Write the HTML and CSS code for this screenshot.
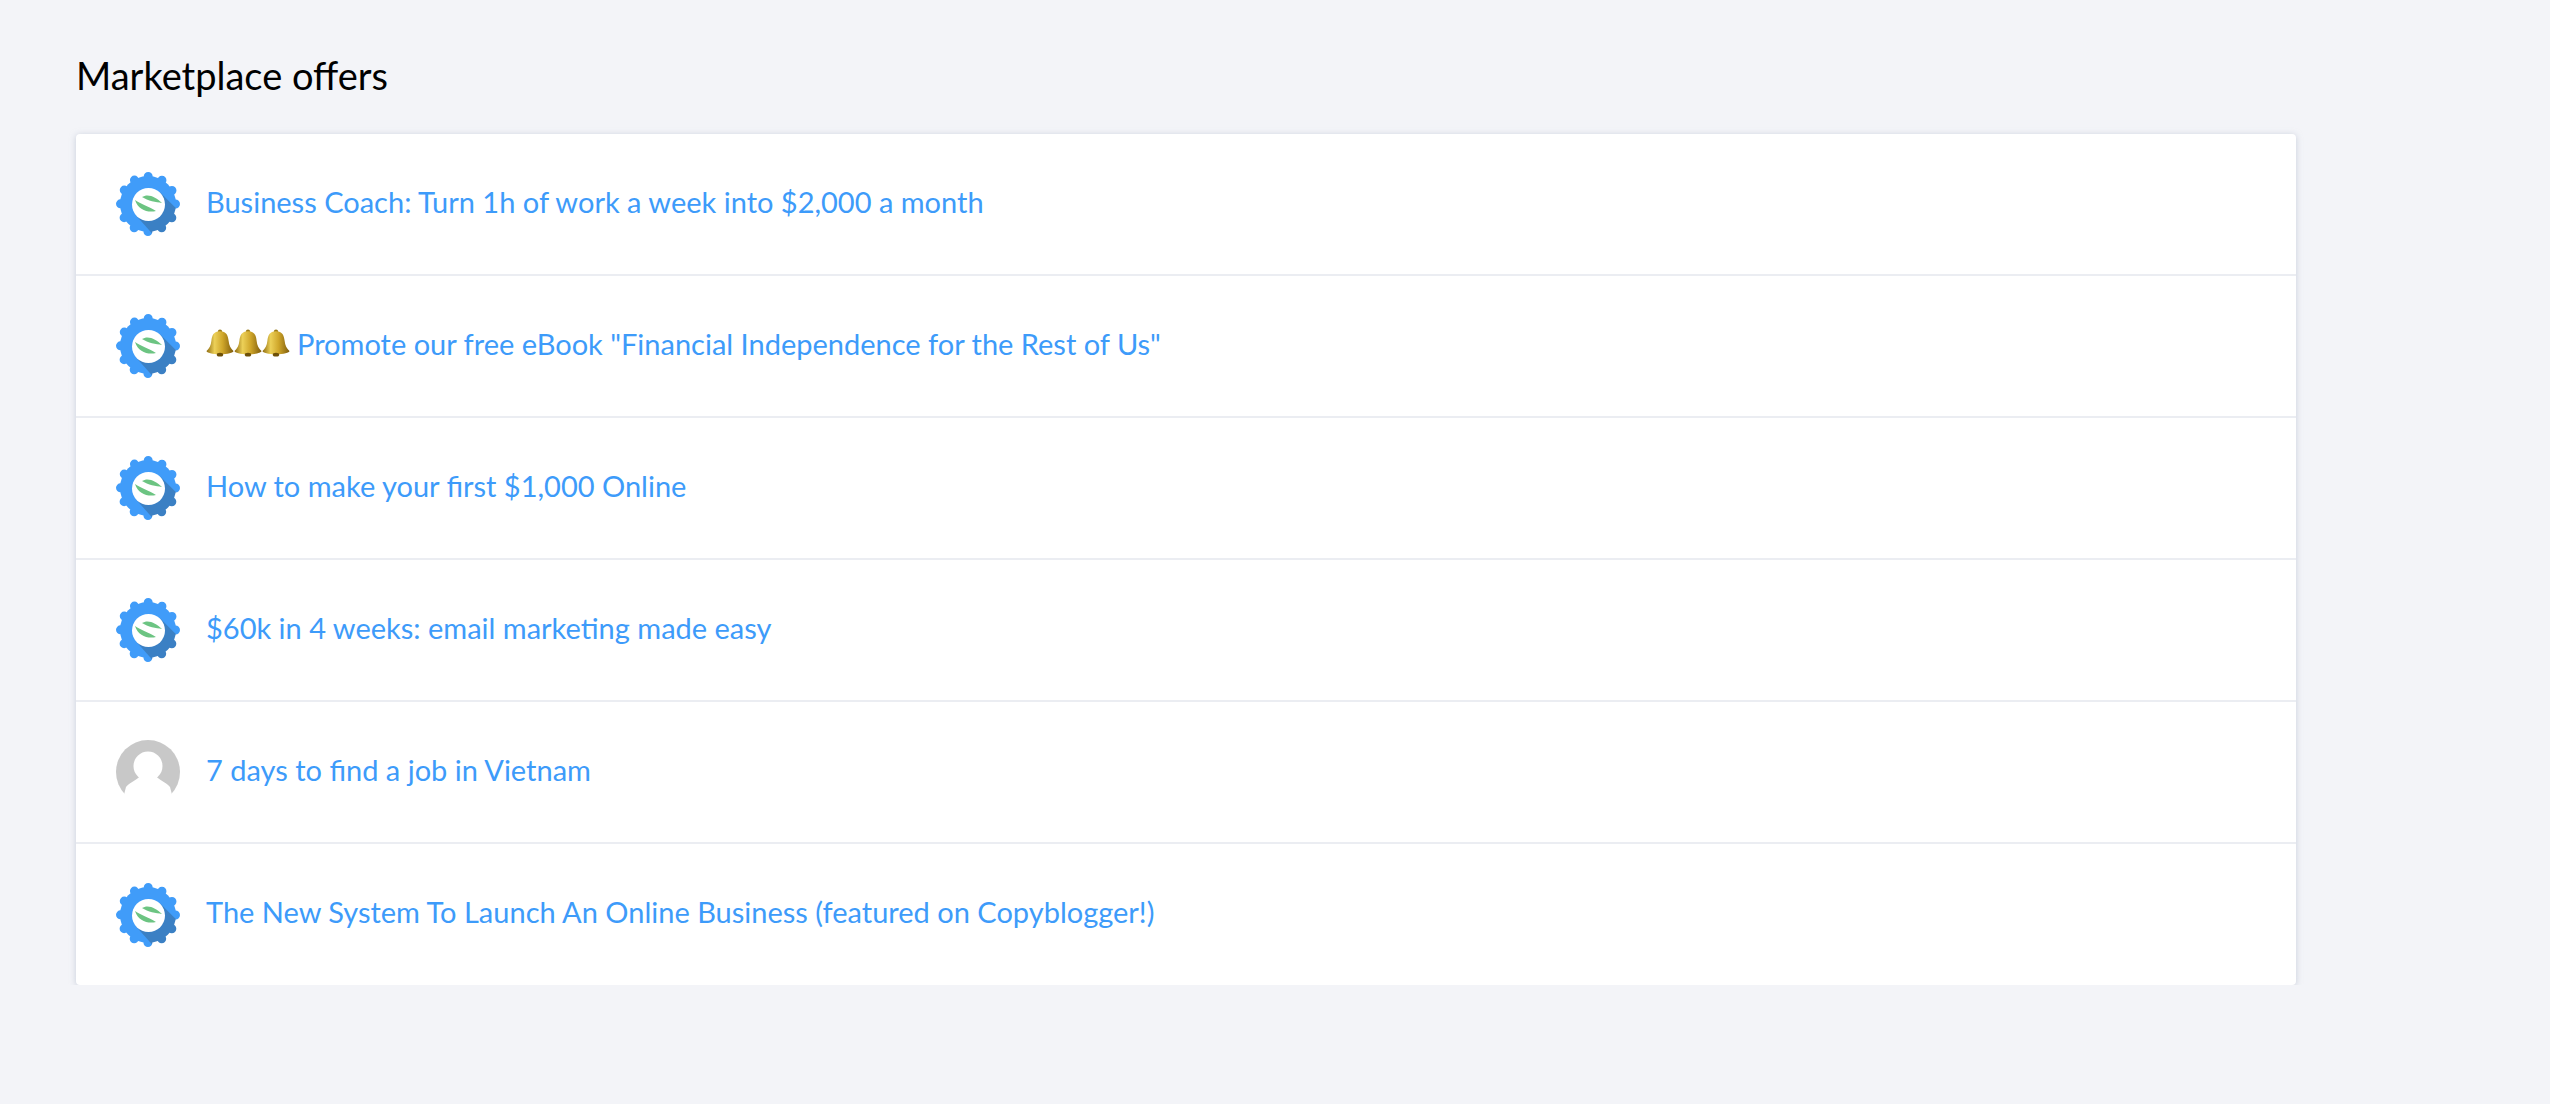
FILE: index.html
```html
<!DOCTYPE html>
<html lang="en">

<head>
    <meta charset="UTF-8">
    <meta name="viewport" content="width=device-width, initial-scale=1.0">
    <title>Marketplace offers</title>
    <link rel="stylesheet" href="styles.css">
</head>

<body>
    <!-- icon definitions -->
    <svg class="defs" width="0" height="0">
        <defs>
            <mask id="gearMask">
                <circle cx="32" cy="32" r="28" fill="#fff" />
                <circle cx="32" cy="32" r="27.5" fill="none" stroke="#fff" stroke-width="9" stroke-linecap="round" stroke-dasharray="0 14.4" />
            </mask>
            <clipPath id="circleClip">
                <circle cx="32" cy="32" r="32" />
            </clipPath>
            <linearGradient id="bellGold" x1="0" y1="0" x2="1" y2="0">
                <stop offset="0" stop-color="#8f6c10" />
                <stop offset="0.3" stop-color="#ecd058" />
                <stop offset="0.6" stop-color="#cfa62a" />
                <stop offset="1" stop-color="#7f5c0c" />
            </linearGradient>
            <symbol id="gear" viewBox="0 0 64 64">
                <g class="soft">
                    <g mask="url(#gearMask)">
                        <rect width="64" height="64" fill="#409cf9" />
                        <path d="M44 20.3 L70 46.3 L70 70 L43.7 70 L20.3 43.7 Z" fill="#3b80c4" />
                    </g>
                    <circle cx="32.500" cy="32.500" r="16.500" fill="#fff" />
                    <path d="M26 25 C32 21 40 25 46 31 C40 30 32 29 26 25 Z" fill="#6cc482" />
                    <path d="M19 28 C25 32 32 34 40 39 C32 41 22 38 19 28 Z" fill="#6cc482" />
                </g>
            </symbol>
            <symbol id="person" viewBox="0 0 64 64">
                <g class="soft" clip-path="url(#circleClip)">
                    <rect width="64" height="64" fill="#c8c8c8" />
                    <circle cx="32" cy="26" r="14.500" fill="#fff" />
                    <path d="M24 36 L40 36 C43 40 50 42 54 47 L60 70 L4 70 L10 47 C14 42 21 40 24 36 Z" fill="#fff" />
                </g>
            </symbol>
            <symbol id="bell" viewBox="0 0 26 26">
                <circle cx="13" cy="2.500" r="2" fill="#9a7a18" />
                <path d="M13 2 C7 2 5.500 6 5 11 C4.600 15.500 3 18 0.500 20.500 C0.500 22.200 6 23.500 13 23.500 C20 23.500 25.500 22.200 25.500 20.500 C23 18 21.400 15.500 21 11 C20.500 6 19 2 13 2 Z" fill="url(#bellGold)" />
                <ellipse cx="13" cy="23.800" rx="3" ry="1.800" fill="#6e5008" />
            </symbol>
        </defs>
    </svg>

    <div class="page">
        <h1 class="page_title">Marketplace offers</h1>

        <!-- offers list -->
        <ul class="offers">
            <li class="offer">
                <svg class="avatar"><use href="#gear" /></svg>
                <a class="offer_link" href="#">Business Coach: Turn 1h of work a week into $2,000 a month</a>
            </li>
            <li class="offer">
                <svg class="avatar"><use href="#gear" /></svg>
                <span class="bells">
                    <svg class="bell"><use href="#bell" /></svg>
                    <svg class="bell"><use href="#bell" /></svg>
                    <svg class="bell"><use href="#bell" /></svg>
                </span>
                <a class="offer_link" href="#">Promote our free eBook "Financial Independence for the Rest of Us"</a>
            </li>
            <li class="offer">
                <svg class="avatar"><use href="#gear" /></svg>
                <a class="offer_link" href="#">How to make your first $1,000 Online</a>
            </li>
            <li class="offer">
                <svg class="avatar"><use href="#gear" /></svg>
                <a class="offer_link" href="#">$60k in 4 weeks: email marketing made easy</a>
            </li>
            <li class="offer">
                <svg class="avatar"><use href="#person" /></svg>
                <a class="offer_link" href="#">7 days to find a job in Vietnam</a>
            </li>
            <li class="offer">
                <svg class="avatar"><use href="#gear" /></svg>
                <a class="offer_link" href="#">The New System To Launch An Online Business (featured on Copyblogger!)</a>
            </li>
        </ul>
    </div>
</body>

</html>
```

FILE: styles.css
```css
* {
    margin: 0;
    padding: 0;
    box-sizing: border-box;
}

li {
    list-style: none;
}

body {
    background: #f3f4f8;
    font-family: "Lato", "Noto Sans", sans-serif;
}

.defs {
    position: absolute;
}

.soft {
    filter: blur(0.6px);
}

.page {
    width: 2220px;
    margin-left: 76px;
    padding-top: 52px;
}

.page_title {
    font-size: 38px;
    line-height: 46px;
    font-weight: 400;
    color: #000;
    margin-bottom: 36px;
}

.offers {
    background: #fff;
    border-radius: 4px;
    box-shadow: 0 1px 6px rgba(170, 180, 198, 0.6);
}

.offer {
    height: 142px;
    padding-left: 40px;
    display: flex;
    align-items: center;
    border-bottom: 2px solid #ebedf2;
}

.offer:last-child {
    border-bottom: none;
    height: 141px;
}

.avatar {
    width: 64px;
    height: 64px;
    margin-right: 26px;
    flex-shrink: 0;
}

.bells {
    display: flex;
    margin-right: 7px;
    margin-bottom: 6px;
}

.bell {
    width: 28px;
    height: 28px;
}

.offer_link {
    font-size: 29px;
    color: #3d9bfa;
    text-decoration: none;
    margin-bottom: 6px;
}
```
